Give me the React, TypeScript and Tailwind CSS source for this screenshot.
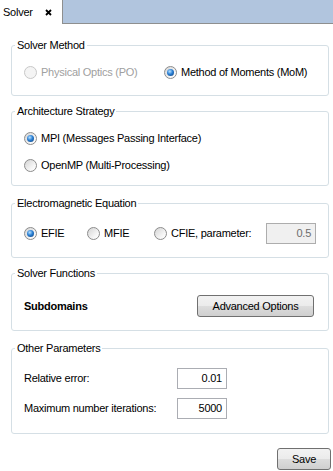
import * as React from 'react';

const Radio = ({ checked = false, disabled = false, label }: { checked?: boolean; disabled?: boolean; label: string }) => (
  <label className={`flex h-[16px] items-center gap-[4px] ${disabled ? 'text-[#a0a0a0]' : 'text-black'}`}>
    <span
      className={`flex h-[13px] w-[13px] shrink-0 items-center justify-center rounded-full border ${
        disabled
          ? 'border-[#c8c8c8] bg-[#f4f4f4]'
          : 'border-[#8c8c8c] bg-[linear-gradient(135deg,#d4d4d4,#f7f7f7_70%,#ffffff)]'
      }`}
    >
      {checked && (
        <span className="h-[7px] w-[7px] rounded-full bg-[radial-gradient(circle_at_40%_35%,#b8e2ff,#2a7fd4_45%,#0c3b73)]" />
      )}
    </span>
    <span className="whitespace-nowrap">{label}</span>
  </label>
);

const GroupBox = ({ title, className, children }: { title: string; className: string; children: React.ReactNode }) => (
  <fieldset className={`rounded-[3px] border border-[#d5dfe5] pl-[12px] pr-[12px] ${className}`}>
    <legend className="ml-[-9px] px-[2px] leading-[14px]">{title}</legend>
    {children}
  </fieldset>
);

const Field = ({ value, disabled = false }: { value: string; disabled?: boolean }) => (
  <div
    className={`flex h-[21px] w-[50px] items-center justify-end border pr-[4px] ${
      disabled ? 'border-[#adadad] bg-[#f0f0f0] text-[#6d6d6d]' : 'border-[#abadb3] bg-white text-black'
    }`}
  >
    {value}
  </div>
);

const WinButton = ({ label, className }: { label: string; className: string }) => (
  <button
    className={`flex items-center justify-center rounded-[3px] border border-[#707070] bg-[linear-gradient(#f2f2f2,#ebebeb_50%,#dddddd_50%,#cfcfcf)] text-black ${className}`}
  >
    {label}
  </button>
);

const App = () => {
  return (
    <div className="h-[471px] w-[333px] overflow-hidden bg-white font-['Liberation_Sans',Arial,sans-serif] text-[11px] tracking-[-0.25px] text-black">
      <div className="flex h-[24px]">
        <div className="flex w-[62px] items-center gap-[12px] pl-[3px]">
          <span>Solver</span>
          <svg className="h-[7px] w-[7px]" viewBox="0 0 7 7">
            <path d="M1 1L6 6M6 1L1 6" stroke="#000" strokeWidth="1.8" />
          </svg>
        </div>
        <div className="flex-1 border-b border-l border-[#8e8f8f] bg-[#b1c5de]" />
      </div>

      <div className="flex flex-col pl-[11px] pr-[4px]">
        <GroupBox title="Solver Method" className="mt-[14px] pt-[12px] pb-[15px]">
          <div className="flex">
            <div className="w-[140px]">
              <Radio disabled label="Physical Optics (PO)" />
            </div>
            <Radio checked label="Method of Moments (MoM)" />
          </div>
        </GroupBox>

        <GroupBox title="Architecture Strategy" className="mt-[8px] pt-[12px] pb-[12px]">
          <div className="flex flex-col gap-[11px]">
            <Radio checked label="MPI (Messages Passing Interface)" />
            <Radio label="OpenMP (Multi-Processing)" />
          </div>
        </GroupBox>

        <GroupBox title="Electromagnetic Equation" className="mt-[10px] pt-[12px] pb-[13px]">
          <div className="flex h-[22px] items-center">
            <div className="w-[63px]">
              <Radio checked label="EFIE" />
            </div>
            <div className="w-[67px]">
              <Radio label="MFIE" />
            </div>
            <Radio label="CFIE, parameter:" />
            <div className="ml-auto">
              <Field value="0.5" disabled />
            </div>
          </div>
        </GroupBox>

        <GroupBox title="Solver Functions" className="mt-[8px] pt-[15px] pb-[13px]">
          <div className="flex h-[22px] items-center">
            <span className="font-bold">Subdomains</span>
            <WinButton label="Advanced Options" className="ml-auto mr-[2px] h-[22px] w-[117px]" />
          </div>
        </GroupBox>

        <GroupBox title="Other Parameters" className="mt-[10px] pt-[13px] pb-[14px]">
          <div className="flex flex-col gap-[9px]">
            <div className="flex items-center">
              <span className="w-[153px]">Relative error:</span>
              <Field value="0.01" />
            </div>
            <div className="flex items-center">
              <span className="w-[153px]">Maximum number iterations:</span>
              <Field value="5000" />
            </div>
          </div>
        </GroupBox>

        <div className="mt-[14px] flex justify-end">
          <WinButton label="Save" className="mr-[-2px] h-[22px] w-[54px]" />
        </div>
      </div>
    </div>
  );
};

export default App;
